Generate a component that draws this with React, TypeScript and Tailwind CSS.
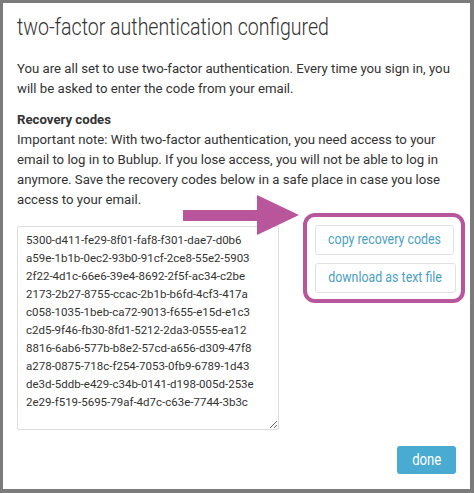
const codes = [
  '5300-d411-fe29-8f01-faf8-f301-dae7-d0b6',
  'a59e-1b1b-0ec2-93b0-91cf-2ce8-55e2-5903',
  '2f22-4d1c-66e6-39e4-8692-2f5f-ac34-c2be',
  '2173-2b27-8755-ccac-2b1b-b6fd-4cf3-417a',
  'c058-1035-1beb-ca72-9013-f655-e15d-e1c3',
  'c2d5-9f46-fb30-8fd1-5212-2da3-0555-ea12',
  '8816-6ab6-577b-b8e2-57cd-a656-d309-47f8',
  'a278-0875-718c-f254-7053-0fb9-6789-1d43',
  'de3d-5ddb-e429-c34b-0141-d198-005d-253e',
  '2e29-f519-5695-79af-4d7c-c63e-7744-3b3c',
];

const font = { fontFamily: 'Roboto, "Liberation Sans", sans-serif' };

const ghostBtn =
  'flex h-[30px] items-center justify-center whitespace-nowrap rounded-[3px] border border-[#e2e2e2] text-[15.5px] text-[#4a9fc2]';

export default function App() {
  return (
    <div className="h-[493px] w-[474px] overflow-hidden bg-[#7b7b7b] pl-[3px] pt-[3px]" style={font}>
      <div className="relative flex h-[486px] w-[467px] flex-col bg-white px-[14px] pt-[8px] text-[#333]">
        <h4 className="whitespace-nowrap text-[24px] font-light leading-[32px] text-[#333]">
          <span className="inline-block origin-left scale-x-[0.815]">two-factor authentication configured</span>
        </h4>

        <p className="mt-[16px] text-[13.2px] leading-[20px]">
          You are all set to use two-factor authentication. Every time you sign in, you will be asked to
          enter the code from your email.
        </p>

        <div className="mt-[11px] text-[13.2px] leading-[20px]">
          <div className="font-bold">Recovery codes</div>
          <p>
            Important note: With two-factor authentication, you need access to your email to log in to
            Bublup. If you lose access, you will not be able to log in anymore. Save the recovery codes
            below in a safe place in case you lose access to your email.
          </p>
        </div>

        <div className="mt-[16px] flex items-start">
          <textarea
            readOnly
            value={codes.join('\n')}
            className="h-[204px] w-[263px] resize rounded-[2px] border border-[#ddd] px-[8px] pt-[4px] text-[11.5px] leading-[18px] text-[#333] outline-none"
            style={font}
          />
          <div className="-mt-px ml-[36px] flex flex-col gap-[8px]">
            <button className={`${ghostBtn} w-[139px]`}>
              <span className="inline-block scale-x-[0.8]">copy recovery codes</span>
            </button>
            <button className={`${ghostBtn} w-[141px]`}>
              <span className="inline-block scale-x-[0.8]">download as text file</span>
            </button>
          </div>
        </div>

        <div className="mt-auto mb-[15px] flex justify-end">
          <button className="h-[28px] w-[59px] rounded-[3px] bg-[#4aabd2] text-[16px] text-white">
            <span className="inline-block scale-x-[0.82]">done</span>
          </button>
        </div>

        {/* annotation: arrow pointing at the export buttons */}
        <svg className="absolute left-[180px] top-[188px]" width="122" height="48" viewBox="0 0 122 48">
          <rect x="0" y="19" width="78" height="11" fill="#b8559b" />
          <polygon points="74,4 116,24 74,44" fill="#b8559b" />
        </svg>
        <div className="absolute left-[300px] top-[210px] h-[90px] w-[162px] rounded-[12px] border-[4px] border-[#b8559b]" />
      </div>
    </div>
  );
}
